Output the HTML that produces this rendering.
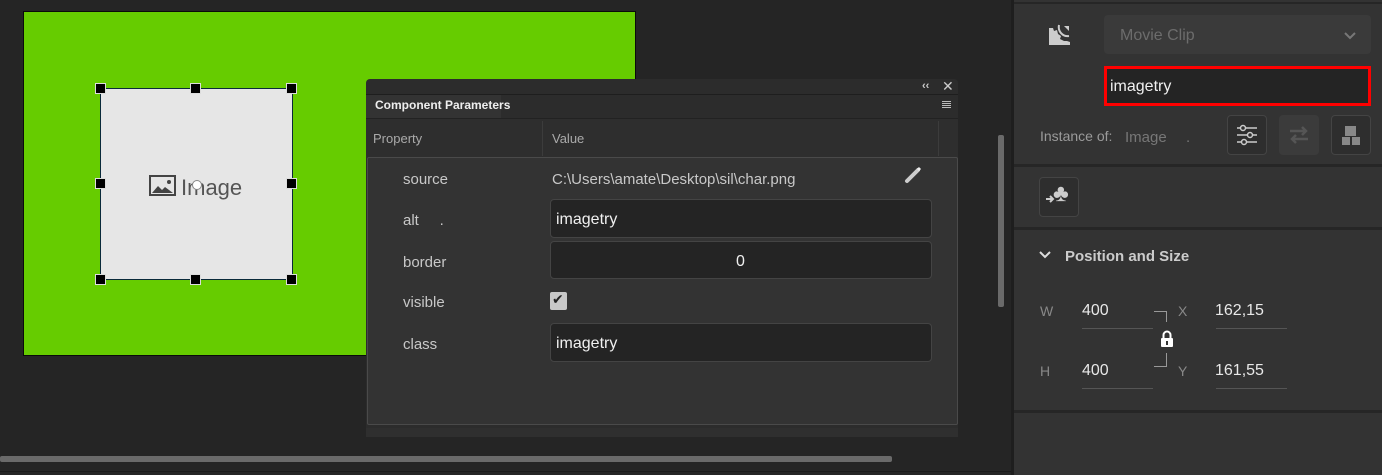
<!DOCTYPE html>
<html><head><meta charset="utf-8"><style>
*{margin:0;padding:0;box-sizing:border-box}
body{width:1382px;height:475px;background:#252525;position:relative;overflow:hidden;font-family:"Liberation Sans","DejaVu Sans",sans-serif}
.a{position:absolute}
.t{position:absolute;white-space:nowrap}
</style></head><body>
<div class="a" style="left:23px;top:11px;width:613px;height:345px;background:#66cc00;border:1px solid #0a0a0a"></div>
<div class="a" style="left:100px;top:88px;width:193px;height:192px;background:#e6e6e6;border:1px solid #0a2a3a"></div>
<svg class="a" style="left:149px;top:175px" width="28" height="22" viewBox="0 0 28 22"><rect x="1" y="1" width="25" height="19" fill="none" stroke="#444" stroke-width="2"/><path d="M3 18 L9 11 L13 15 L16 12 L24 18Z" fill="#444"/><circle cx="20" cy="7" r="2" fill="#444"/></svg>
<div class="t" style="left:181px;top:175px;font-size:22px;color:#555">Image</div>
<div class="a" style="left:192px;top:180px;width:10px;height:10px;border-radius:50%;background:#fff;border:1px solid #888"></div>
<div class="a" style="left:95px;top:83px;width:11px;height:11px;background:#000;border:1px solid #ddd"></div>
<div class="a" style="left:190px;top:83px;width:11px;height:11px;background:#000;border:1px solid #ddd"></div>
<div class="a" style="left:286px;top:83px;width:11px;height:11px;background:#000;border:1px solid #ddd"></div>
<div class="a" style="left:95px;top:178px;width:11px;height:11px;background:#000;border:1px solid #ddd"></div>
<div class="a" style="left:286px;top:178px;width:11px;height:11px;background:#000;border:1px solid #ddd"></div>
<div class="a" style="left:95px;top:274px;width:11px;height:11px;background:#000;border:1px solid #ddd"></div>
<div class="a" style="left:190px;top:274px;width:11px;height:11px;background:#000;border:1px solid #ddd"></div>
<div class="a" style="left:286px;top:274px;width:11px;height:11px;background:#000;border:1px solid #ddd"></div>
<div class="a" style="left:998px;top:135px;width:6px;height:172px;background:#6a6a6a;border-radius:2px"></div>
<div class="a" style="left:0;top:456px;width:892px;height:6px;background:#6a6a6a;border-radius:2px"></div>
<div class="a" style="left:0;top:471px;width:1011px;height:1px;background:#1a1a1a"></div>
<div class="a" style="left:366px;top:79px;width:592px;height:358px;background:#2c2c2c;border-radius:4px 4px 0 0"></div>
<div class="a" style="left:366px;top:94px;width:592px;height:1px;background:#1e1e1e"></div>
<div class="t" style="left:922px;top:80px;font-size:11px;color:#ccc;font-weight:bold">‹‹</div>
<div class="t" style="left:942px;top:78px;font-size:14px;color:#ccc;font-weight:bold">✕</div>
<div class="a" style="left:366px;top:95px;width:135px;height:24px;background:#333"></div>
<div class="t" style="left:375px;top:98px;font-size:12px;color:#eee;font-weight:bold">Component Parameters</div>
<div class="a" style="left:942px;top:101px;width:9px;height:1px;background:#bbb;box-shadow:0 2px 0 #bbb,0 4px 0 #bbb,0 6px 0 #bbb"></div>
<div class="a" style="left:366px;top:118px;width:592px;height:1px;background:#222"></div>
<div class="a" style="left:366px;top:119px;width:592px;height:38px;background:#2e2e2e"></div>
<div class="t" style="left:373px;top:131px;font-size:13px;color:#aaa">Property</div>
<div class="a" style="left:542px;top:121px;width:1px;height:35px;background:#3c3c3c"></div>
<div class="a" style="left:938px;top:121px;width:1px;height:35px;background:#3c3c3c"></div>
<div class="t" style="left:552px;top:131px;font-size:13px;color:#aaa">Value</div>
<div class="a" style="left:367px;top:157px;width:591px;height:268px;background:#333;border:1px solid #4a4a4a;border-radius:2px"></div>
<div class="a" style="left:366px;top:428px;width:592px;height:9px;background:#2f2f2f"></div>
<div class="t" style="left:403px;top:171px;font-size:15px;color:#c8c8c8">source</div>
<div class="t" style="left:552px;top:171px;font-size:15px;color:#c8c8c8">C:\Users\amate\Desktop\sil\char.png</div>
<svg class="a" style="left:904px;top:166px" width="20" height="18" viewBox="0 0 20 18"><path d="M3 15 L14 4" stroke="#ccc" stroke-width="4" stroke-linecap="round"/><path d="M14 4 L16 2" stroke="#eee" stroke-width="3"/></svg>
<div class="t" style="left:403px;top:212px;font-size:15px;color:#c8c8c8">alt&nbsp;&nbsp;&nbsp;&nbsp;&nbsp;.</div>
<div class="a" style="left:550px;top:199px;width:382px;height:39px;background:#242424;border:1px solid #444;border-radius:4px"></div>
<div class="t" style="left:556px;top:211px;font-size:16px;color:#f0f0f0">imagetry</div>
<div class="t" style="left:403px;top:254px;font-size:15px;color:#c8c8c8">border</div>
<div class="a" style="left:550px;top:241px;width:382px;height:38px;background:#242424;border:1px solid #444;border-radius:4px"></div>
<div class="t" style="left:736px;top:253px;font-size:16px;color:#f0f0f0">0</div>
<div class="t" style="left:403px;top:294px;font-size:15px;color:#c8c8c8">visible</div>
<div class="a" style="left:550px;top:292px;width:17px;height:18px;background:#c8c8c8;border-radius:2px"></div>
<div class="t" style="left:552px;top:291px;font-size:14px;color:#222;font-weight:bold">✔</div>
<div class="t" style="left:403px;top:336px;font-size:15px;color:#c8c8c8">class</div>
<div class="a" style="left:550px;top:323px;width:382px;height:39px;background:#242424;border:1px solid #444;border-radius:4px"></div>
<div class="t" style="left:556px;top:335px;font-size:16px;color:#f0f0f0">imagetry</div>
<div class="a" style="left:1011px;top:0;width:3px;height:475px;background:#1e1e1e"></div>
<div class="a" style="left:1014px;top:0;width:368px;height:475px;background:#333"></div>
<div class="a" style="left:1014px;top:2px;width:368px;height:2px;background:#262626"></div>
<div class="a" style="left:1014px;top:164px;width:368px;height:3px;background:#262626"></div>
<div class="a" style="left:1014px;top:227px;width:368px;height:3px;background:#262626"></div>
<div class="a" style="left:1014px;top:410px;width:368px;height:3px;background:#262626"></div>
<svg class="a" style="left:1048px;top:24px" width="24" height="22" viewBox="0 0 24 22"><path d="M1 4 H5 L6 7 L9 6 L10 10 L13 12 L12 15 L16 17 L19 17 L22 18 V21 H1Z" fill="#ccc"/><path d="M11 1 A9 9 0 0 0 21 12" fill="none" stroke="#ccc" stroke-width="2"/><path d="M16 2 L21 2 L21 7Z" fill="#ccc"/></svg>
<div class="a" style="left:1104px;top:15px;width:267px;height:39px;background:#3a3a3a;border-radius:4px"></div>
<div class="t" style="left:1120px;top:27px;font-size:16px;color:#6c6c6c">Movie Clip</div>
<svg class="a" style="left:1343px;top:31px" width="14" height="9" viewBox="0 0 14 9"><path d="M2 2 L7 7 L12 2" fill="none" stroke="#777" stroke-width="2"/></svg>
<div class="a" style="left:1104px;top:66px;width:267px;height:40px;background:#242424;border:3px solid #f00"></div>
<div class="t" style="left:1110px;top:78px;font-size:16px;color:#f0f0f0">imagetry</div>
<div class="t" style="left:1040px;top:128px;font-size:14px;color:#9a9a9a">Instance of:</div>
<div class="t" style="left:1125px;top:129px;font-size:15px;color:#777">Image</div>
<div class="t" style="left:1186px;top:129px;font-size:15px;color:#777">.</div>
<div class="a" style="left:1227px;top:115px;width:40px;height:40px;border:1px solid #444;border-radius:4px;background:#2e2e2e"></div>
<svg class="a" style="left:1236px;top:124px" width="22" height="22" viewBox="0 0 22 22" fill="none" stroke="#ccc" stroke-width="1.5"><path d="M1 4H21M1 11H21M1 18H21"/><circle cx="7" cy="4" r="2.5" fill="#2e2e2e"/><circle cx="14" cy="11" r="2.5" fill="#2e2e2e"/><circle cx="8" cy="18" r="2.5" fill="#2e2e2e"/></svg>
<div class="a" style="left:1279px;top:115px;width:40px;height:40px;border-radius:4px;background:#3b3b3b"></div>
<svg class="a" style="left:1289px;top:126px" width="20" height="18" viewBox="0 0 20 18" fill="none" stroke="#555" stroke-width="2.5"><path d="M1 5H17M13 1L17 5L13 9M19 13H3M7 9L3 13L7 17"/></svg>
<div class="a" style="left:1331px;top:115px;width:40px;height:40px;border:1px solid #444;border-radius:4px;background:#2e2e2e"></div>
<div class="a" style="left:1345px;top:126px;width:11px;height:10px;background:#888"></div>
<div class="a" style="left:1341px;top:136px;width:10px;height:10px;background:#888;border:1px solid #2e2e2e"></div>
<div class="a" style="left:1351px;top:136px;width:10px;height:10px;background:#888;border:1px solid #2e2e2e"></div>
<div class="a" style="left:1039px;top:177px;width:40px;height:40px;border:1px solid #444;border-radius:4px;background:#2e2e2e"></div>
<div class="t" style="left:1053px;top:182px;font-size:24px;color:#ccc;line-height:1">♣</div>
<svg class="a" style="left:1046px;top:195px" width="10" height="8" viewBox="0 0 10 8"><path d="M0 4H6M4 1L7 4L4 7" fill="none" stroke="#ccc" stroke-width="2"/></svg>
<svg class="a" style="left:1039px;top:251px" width="12" height="8" viewBox="0 0 12 8"><path d="M1 1 L6 6 L11 1" fill="none" stroke="#ddd" stroke-width="2"/></svg>
<div class="t" style="left:1065px;top:248px;font-size:15px;color:#ccc;font-weight:bold">Position and Size</div>
<div class="t" style="left:1040px;top:303px;font-size:14px;color:#888">W</div>
<div class="t" style="left:1082px;top:302px;font-size:16px;color:#e8e8e8">400</div>
<div class="a" style="left:1082px;top:328px;width:71px;height:1px;background:#555"></div>
<div class="t" style="left:1178px;top:303px;font-size:14px;color:#888">X</div>
<div class="t" style="left:1215px;top:302px;font-size:16px;color:#e8e8e8">162,15</div>
<div class="a" style="left:1216px;top:328px;width:71px;height:1px;background:#555"></div>
<div class="t" style="left:1040px;top:363px;font-size:14px;color:#888">H</div>
<div class="t" style="left:1082px;top:362px;font-size:16px;color:#e8e8e8">400</div>
<div class="a" style="left:1082px;top:388px;width:71px;height:1px;background:#555"></div>
<div class="t" style="left:1178px;top:363px;font-size:14px;color:#888">Y</div>
<div class="t" style="left:1215px;top:362px;font-size:16px;color:#e8e8e8">161,55</div>
<div class="a" style="left:1216px;top:388px;width:71px;height:1px;background:#555"></div>
<div class="a" style="left:1154px;top:311px;width:13px;height:11px;border-top:1px solid #999;border-right:1px solid #999"></div>
<div class="a" style="left:1154px;top:353px;width:13px;height:14px;border-bottom:1px solid #999;border-right:1px solid #999"></div>
<svg class="a" style="left:1160px;top:330px" width="14" height="18" viewBox="0 0 14 18"><path d="M3.5 8 V5 A3.5 3.5 0 0 1 10.5 5 V8" fill="none" stroke="#fff" stroke-width="2"/><rect x="1" y="8" width="12" height="9" rx="1" fill="#fff"/><rect x="6" y="11" width="2" height="4" fill="#333"/></svg>
</body></html>
